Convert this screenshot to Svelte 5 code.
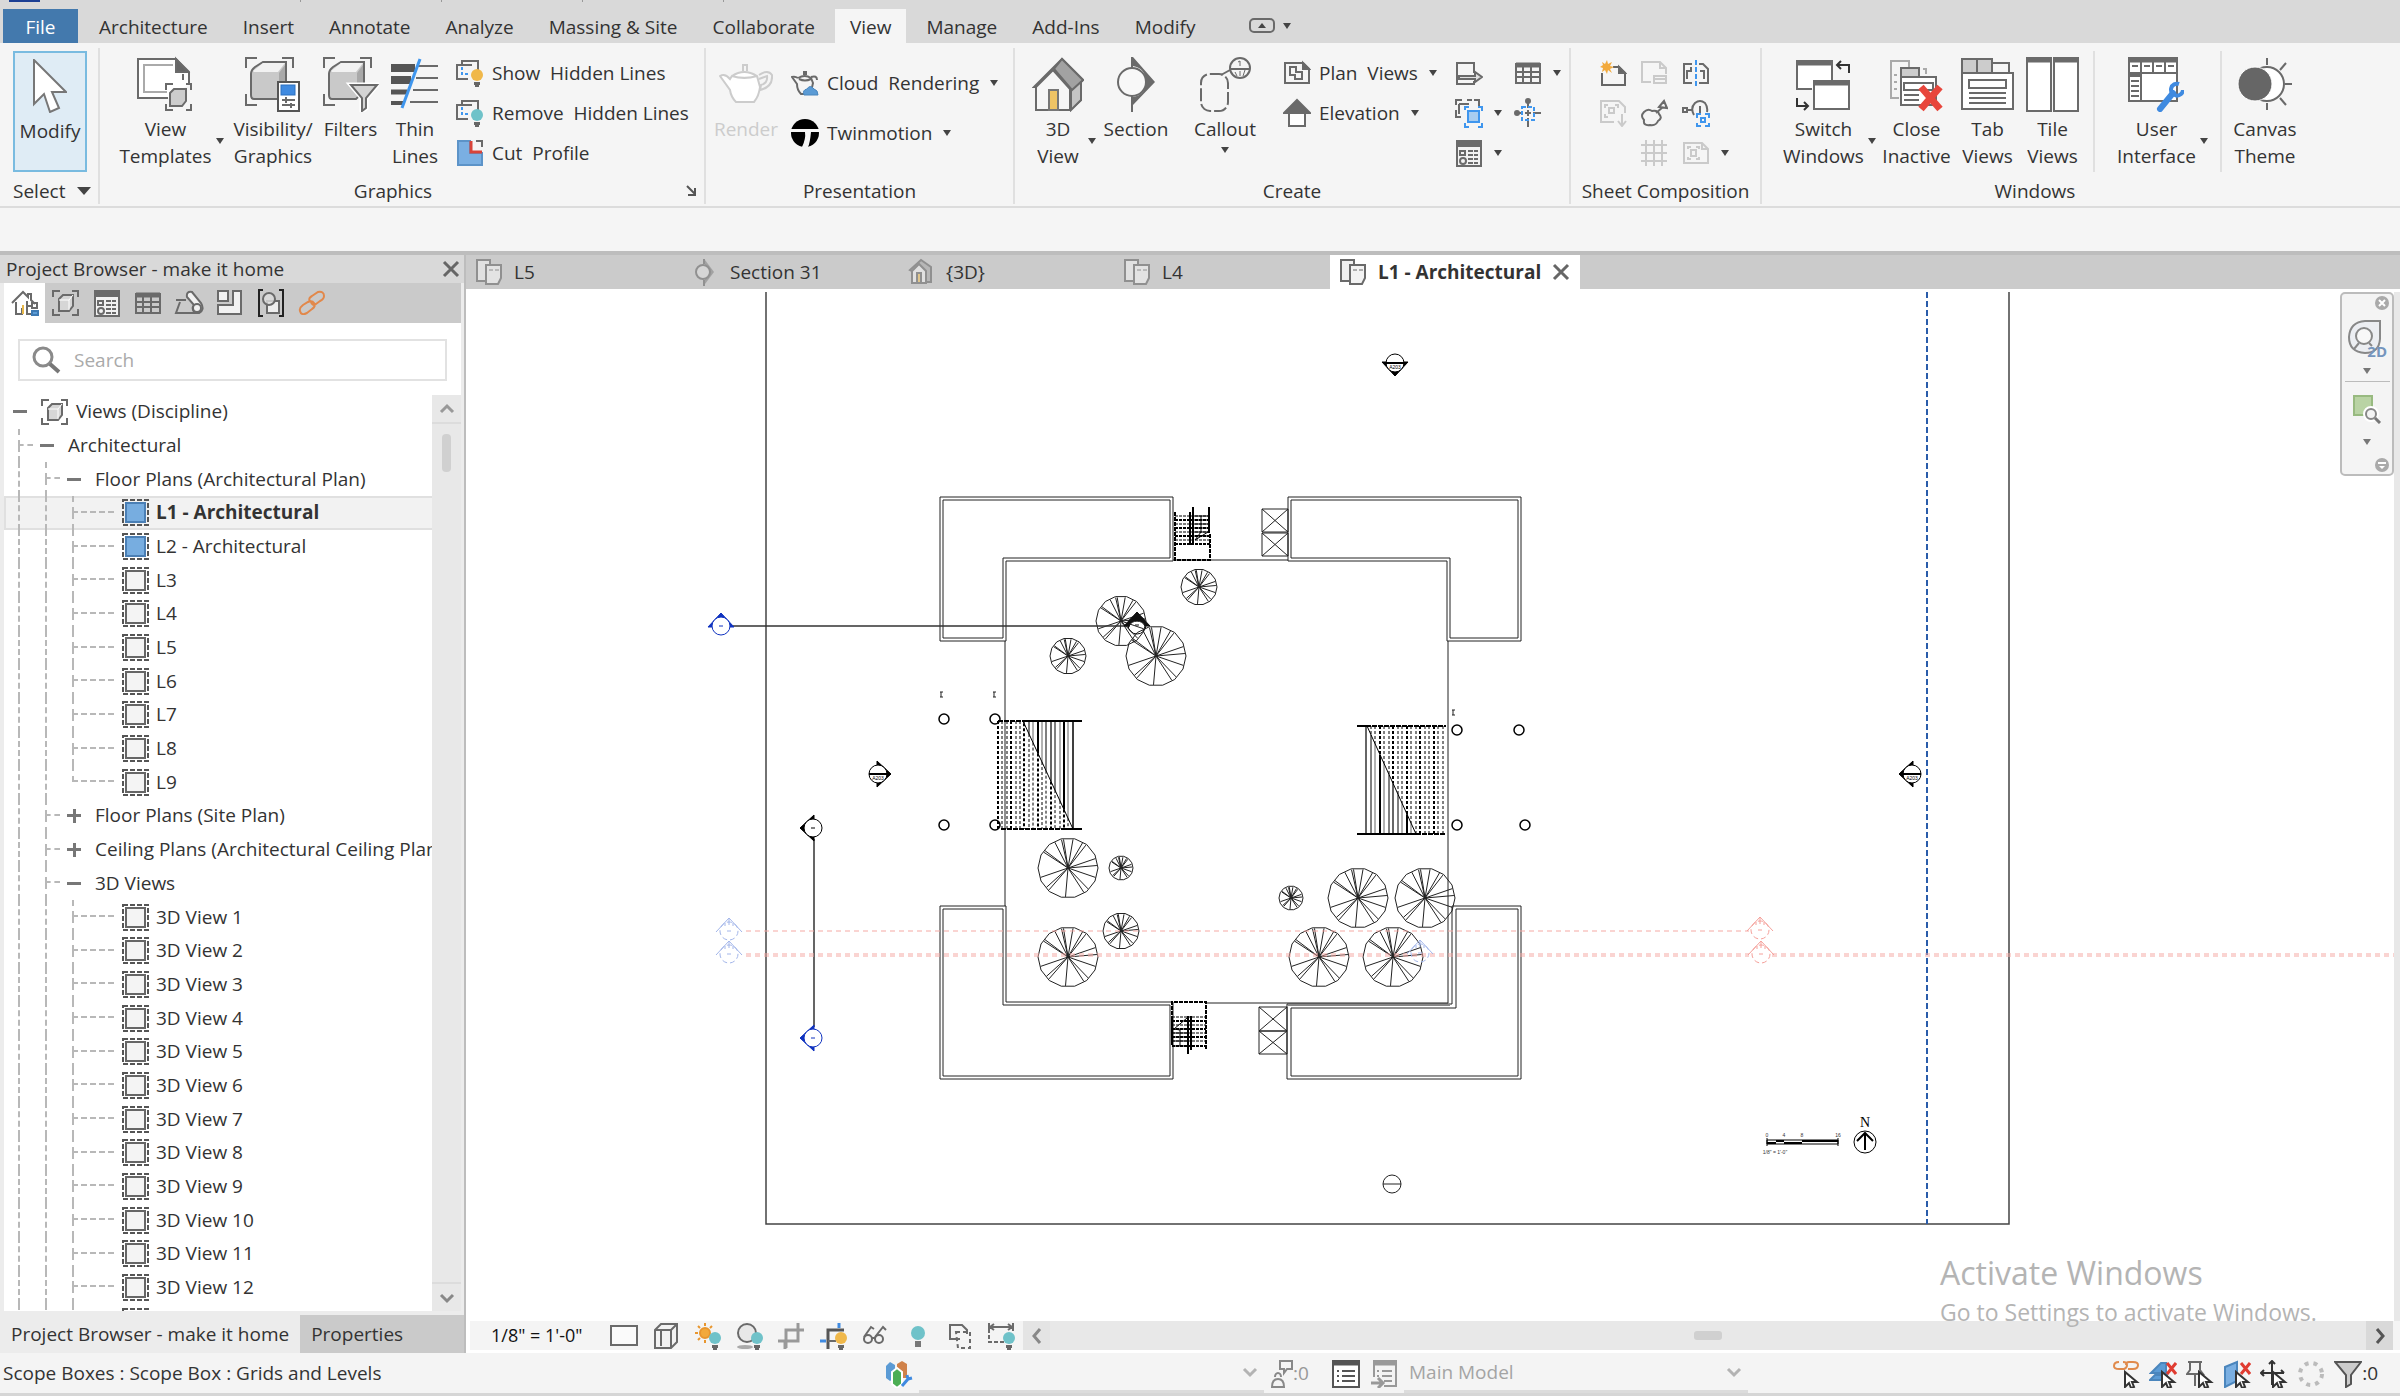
<script>
  // each icon: [width, height, svg markup]
  const cube = '<path d="M6 18q0-4 4-7l8-5h23v29l-8 8H9q-3 0-3-4z" fill="#c9c9c9"/><path d="M8 15l10-8h22l-7 9H9z" fill="#f2f2f2" stroke="none"/><path d="M34 17l6-8v25l-6 7z" fill="#a9a9a9" stroke="none"/>';
  const corners = '<path d="M1 12V2H12M37 2H48V12M1 38V49H12" stroke-width="2"/>';
  const bulb = (x, y, c) =>
    `<g stroke="none"><circle cx="${x}" cy="${y}" r="6" fill="${c}"/><rect x="${x - 3}" y="${y + 7}" width="6" height="3" fill="#666"/><rect x="${x - 2}" y="${y + 10}" width="4" height="2" fill="#666"/></g>`;
  const hidden = '<path d="M6 5V2H22V12M12 20H1V6H16" /><path d="M6 8V15H14" stroke="#3f96ee" stroke-dasharray="3 2"/>';
  const cursor = '<path d="M13 12V27L17 23 19 28 22 27 20 22H25Z" fill="#fff" stroke="#333" stroke-width="2"/>';
  const cross = '<path d="M18 3L27 14M27 3L18 14" stroke="#e03c31" stroke-width="3"/>';
  const smallBrackets = '<path d="M1 8V2H8M20 2H26V8M26 20V26H20M8 26H1V20"/>';
  const smallCube = '<path d="M7 10l4-4h10v11l-4 5H7z" fill="#d6d6d6"/><path d="M7 11h10l4-5M17 11v10" stroke="#fff" stroke-width="1"/>';
  const planIcon = '<path d="M11 23H2V2H15V6" fill="#f0f0f0"/><path d="M11 11V7H26V20L23 26H11Z" fill="#f3f3f3"/><path d="M14 12H25" stroke-dasharray="4 2" stroke-width="1"/>';

  const icons = {
    modify: [34, 54, '<path d="M1 1V45L11 35 17 53 26 49 19 33H33Z" fill="#fff" stroke="#777"/>'],
    templates: [56, 56, '<path d="M31 42H1V3H39L52 16V29" fill="#fff"/><path d="M39 3V16H51Z" fill="#666"/><path d="M30 36H7V9H36" stroke="#aaa"/><path d="M46 24V18"/><path d="M29 34V28H36M49 28H54V34M29 48V54H36M49 54H54V48"/><path d="M33 37l4-4h12v12l-4 5H33z" fill="#ccc"/>'],
    visibility: [56, 56, corners + cube + '<rect x="33" y="26" width="21" height="29" fill="#fff" stroke="#555"/><rect x="36" y="29" width="14" height="10" fill="#3f8ae0" stroke="#2c70c0" stroke-width="1"/><path d="M37 44H50M37 49H50M41 41V47M46 47V52"/>'],
    filters: [56, 56, corners + cube + '<path d="M28 29H54L43 42V52L39 55V42Z" fill="#d4d4d4" stroke="#fff" stroke-width="5"/><path d="M28 29H54L43 42V52L39 55V42Z" fill="#d4d4d4"/>'],
    thin: [50, 52, '<path d="M1 10H25M1 22H21" stroke="#555" stroke-width="8"/><path d="M1 34H17" stroke="#555" stroke-width="5"/><path d="M1 45H13" stroke="#555" stroke-width="4"/><path d="M28 8H48M26 20H48M23 32H48M20 44H48"/><path d="M30 1L12 50" stroke="#3f96ee" stroke-width="3"/>'],
    show: [28, 28, hidden + bulb(21, 16, '#f0b84a')],
    remove: [28, 28, hidden + bulb(21, 16, '#6fc2c9')],
    cut: [28, 28, '<path d="M2 2H14V14H26V26H2Z" fill="#7aafe2" stroke="#5c93c8"/><path d="M15 2V13H26" stroke="#d8443a" stroke-width="3"/><path d="M20 2H26V8"/>'],
    render: [54, 42, '<g stroke="#ccc"><path d="M13 13Q25 5 38 13L41 24Q40 33 35 39H17Q12 34 11 27L1 13Q6 10 11 16L13 13Q25 17 38 13" fill="#fff"/><path d="M40 12Q49 6 53 12Q54 24 41 27L42 22Q49 20 48 13L40 16"/><path d="M24 8V2H28V8"/></g>'],
    cloud: [28, 28, '<path d="M7 9Q14 5 20 9L22 14Q20 24 18 25H10Q6 21 6 15L1 8Q4 7 7 9M20 8Q26 6 26 11M13 6V3H15V6M8 10Q14 13 20 10" stroke-width="2"/><path d="M13 26q-2-5 3-6q3-5 7 0q4 1 4 6z" fill="#5b9bd5" stroke="#4b86bd" stroke-width="1"/>'],
    twin: [28, 28, '<g stroke="none"><circle cx="14" cy="14" r="14" fill="#000"/><path d="M0 10H28V13H20Q19 24 17 28L11 28Q15 20 14 13H0Z" fill="#f5f5f5"/></g>'],
    house: [52, 56, '<path d="M2 31L30 3L51 24L49 26V44L38 54H4V31Z" fill="#f4f4f4"/><path d="M39 31L49 24V44L39 54Z" fill="#c4c4c4"/><path d="M30 3L51 24L40 34L22 13Z" fill="#a2a2a2"/><path d="M4 31L21 14L38 33V54H4Z" fill="#f6f6f6"/><rect x="17" y="34" width="9" height="20" fill="#efc465" stroke="#777"/>'],
    section: [50, 56, '<path d="M22 1L44 26L22 49V41Q35 39 35 25Q34 12 22 10Z" fill="#6a6a6a" stroke="none"/><circle cx="21" cy="26" r="14" fill="#f8f8f8"/><path d="M21 1V12M21 40V56"/>'],
    callout: [56, 56, '<rect x="4" y="18" width="27" height="37" rx="9" stroke-dasharray="13 3"/><path d="M24 19L33 14"/><circle cx="43" cy="12" r="10"/><path d="M33 13H53"/><path d="M41 6L43 5V10M38 16L40 20M43 15V20M48 14L46 20" stroke-width="1"/>'],
    planview: [28, 28, '<path d="M2 4H20L26 10V24H2Z"/><path d="M20 4V10H26Z" fill="#6a6a6a"/><path d="M7 8H13V13H19V20H12V16H7Z"/>'],
    elev: [28, 30, '<path d="M6 15H22V28H6Z" fill="#fff"/><path d="M1 15L14 2L27 15Z" fill="#6a6a6a"/>'],
    drafting: [28, 28, '<path d="M19 14V4H2V25H19V22"/><path d="M4 17H20V13L27 18L20 23V20H4Z" fill="#e0e0e0"/>'],
    schedule: [28, 28, '<path d="M2 5H26V24H2Z"/><path d="M2 6H26" stroke-width="5"/><path d="M2 13H26M2 18H26M9 8V24M17 8V24"/>'],
    duplicate: [28, 30, '<path d="M1 7V2H7M12 2H17M1 12V19H6M4 6H14M4 6V16M19 2H24V8" /><path d="M10 12V9H14M23 9H27V13M27 25V29H23M14 29H10V25" stroke="#3f96ee"/><rect x="13" y="13" width="11" height="11" fill="#a8cdf0" stroke="#3f96ee"/>'],
    scope: [28, 30, '<path d="M14 1V10M14 20V29M1 15H9M19 15H27M14 12V18M11 15H17"/><circle cx="14" cy="3" r="2"/><circle cx="3" cy="15" r="2"/><rect x="8" y="9" width="12" height="13" stroke="#3f96ee" stroke-dasharray="4 2"/>'],
    legend: [28, 28, '<rect x="2" y="2" width="24" height="25" fill="#f2f2f2"/><path d="M2 5H26" stroke-width="6"/><rect x="5" y="12" width="5" height="4"/><circle cx="8" cy="22" r="3"/><path d="M13 12H23M13 16H23M13 20H23M13 24H23" stroke-dasharray="5 1"/>'],
    sheet: [28, 28, '<path d="M3 14V26H26V14L20 8H14" stroke="#666"/><path d="M20 8V14H26Z" fill="#666"/><path d="M8 1L9 5L13 3L11 7L15 8L11 10L13 14L9 11L8 15L6 11L3 13L4 9L1 8L4 6L3 3L6 5Z" fill="#f2a93b" stroke="none"/>'],
    titleblock: [28, 28, '<g stroke="#cacaca"><path d="M11 23H2V3H20L26 9V15"/><path d="M20 3V9H26M14 17H26V24H14ZM14 20H26"/></g>'],
    matchline: [28, 28, '<path d="M10 5H2V24H10M17 5H21L26 10V24H17M5 20V12H9V8M22 20V12H18"/><path d="M14 1V27" stroke="#3f96ee" stroke-width="2" stroke-dasharray="5 2"/>'],
    viewon: [28, 28, '<g stroke="#cacaca"><path d="M15 23H2V2H20L26 8V14"/><path d="M6 9V6H9M16 6H19V9M6 15V18H9M10 9H15V14H10ZM23 15V25M19 22L23 27L27 22"/></g>'],
    revision: [28, 28, '<path d="M4 13Q8 9 12 12Q18 11 19 15Q23 19 18 22Q16 27 10 26Q3 27 4 21Q0 17 4 13ZM16 14L23 8M19 8L24 2L27 9Z"/>'],
    guide: [28, 28, '<path d="M1 6H27M1 14H27M1 22H27M6 1V27M14 1V27M22 1V27" stroke="#cacaca"/>'],
    viewref: [28, 28, '<path d="M1 9H5V13H1ZM6 11H10M12 16Q8 9 13 4Q18 0 23 4Q26 8 25 13M18 7V14"/><path d="M15 19V15H19M23 15H27V19M27 24V27H23M19 27H15V24" stroke="#3f96ee"/><rect x="19" y="19" width="4" height="4" stroke="#3f96ee"/>'],
    viewports: [28, 28, '<g stroke="#cacaca"><path d="M2 4H20L26 10V24H2Z"/><path d="M20 4V10H26M6 10V8H9M14 8H17V10M6 18V20H9M14 20H17V18M9 11H14V17H9Z"/></g>'],
    switch: [56, 56, '<path d="M17 33H2V5H37V24" fill="#fff"/><path d="M2 7H37" stroke-width="5"/><rect x="19" y="25" width="35" height="28" fill="#fff"/><path d="M19 27H54" stroke-width="5"/><path d="M54 17V9H42M46 5L42 9L46 13M2 42V50H13M9 46L13 50L9 54" stroke="#333"/>'],
    closeinactive: [56, 56, '<path d="M10 42H2V5H20V11M5 19H8M5 26H8M5 33H8M34 13H37V18" stroke="#aaa"/><path d="M12 49V12H30V21H47V49Z" fill="#fff"/><path d="M12 12H30V21H12Z" fill="#ccc"/><path d="M15 27H44V34H15ZM15 39H30M15 44H30"/><path d="M32 31L51 53M51 31L32 53" stroke="#e8463c" stroke-width="7"/>'],
    tabviews: [56, 56, '<path d="M2 17V3H32V17M17 3V17" fill="#ccc"/><path d="M32 7H49V17"/><rect x="2" y="17" width="51" height="36" fill="#fff"/><path d="M9 24H46V32H9ZM9 37H46M9 42H46M9 47H46"/>'],
    tileviews: [55, 56, '<rect x="2" y="2" width="24" height="53" fill="#fff"/><rect x="29" y="2" width="24" height="53" fill="#fff"/><path d="M2 4H26M29 4H53" stroke-width="5"/>'],
    userif: [56, 56, '<rect x="1" y="2" width="48" height="43" fill="#fff"/><path d="M1 4H49" stroke-width="5"/><path d="M2 17H48M13 6V45M25 6V17M37 6V17M4 10H10M16 10H22M28 10H34M40 10H46M3 25H11M3 30H11M3 35H11M3 40H11" /><path d="M2 19H12" stroke-width="4"/><path d="M32 53L45 37" stroke="#3f8ae0" stroke-width="6" stroke-linecap="round"/><path d="M51 28A6 6 0 1 0 55 34" stroke="#3f8ae0" stroke-width="4"/>'],
    canvas: [56, 56, '<circle cx="30" cy="28" r="17" fill="#fff"/><path d="M30 2V9M30 47V54M43 14L49 7M43 42L49 49M48 28H55M42 10"/><circle cx="18" cy="28" r="17" fill="#666" stroke="#fff" stroke-width="1"/>'],
    browser: [28, 28, '<path d="M1 14L12 3L17 8V5H20V11L24 15M5 13V25H11V19" /><path d="M12 16V25" stroke="#e8b84a"/><path d="M16 12V25H21M16 17H21M21 14H26V19H21Z"/><rect x="21" y="22" width="6" height="4" fill="#5b9bd5" stroke="#3d79b3"/>'],
    views: [28, 28, smallBrackets + smallCube],
    sheets: [30, 28, '<path d="M6 13L2 24H22"/><path d="M2 11H12"/><path d="M13 8Q12 2 18 3L27 14Q31 21 25 24H21Q17 20 20 16Z" fill="#f2f2f2"/><circle cx="23" cy="19" r="4" fill="#f2f2f2"/>'],
    families: [28, 28, '<path d="M2 2H12V12H2ZM17 2H25V25H2V16H17Z" fill="#f2f2f2"/>'],
    groups: [28, 28, '<path d="M6 1H2V27H6M22 1H26V27H22" stroke="#222"/><path d="M10 12H22V24H10Z" fill="#eee"/><circle cx="12" cy="10" r="6" fill="#ddd" fill-opacity=".8"/>'],
    links: [28, 28, '<path d="M12 13Q10 9 14 7L20 3Q26 2 26 7Q26 10 22 12L18 15Q14 17 13 13M16 14Q18 18 14 20L9 24Q3 27 2 22Q1 19 5 16L10 13Q14 11 16 14" stroke="#e2884a"/>'],
    search: [30, 30, '<circle cx="12" cy="12" r="9" stroke="#8a8a8a" stroke-width="3"/><path d="M19 19L28 27" stroke="#777" stroke-width="4"/>'],
    sheetOn: [27, 27, '<rect x="1" y="1" width="25" height="25" stroke="#555" stroke-dasharray="5 2"/><rect x="4" y="4" width="19" height="19" fill="#77ade0" stroke="#4a7fb5"/>'],
    sheetOff: [27, 27, '<rect x="1" y="1" width="25" height="25" stroke="#555" stroke-dasharray="5 2"/><rect x="4" y="4" width="19" height="19" fill="#f4f4f4" stroke="#666"/>'],
    plan: [28, 28, planIcon],
    sectionTab: [28, 28, '<path d="M14 2L23 14L14 26Z" fill="#888" stroke="none"/><circle cx="12" cy="14" r="7" fill="#ddd"/><path d="M13 1V6M13 22V28"/>'],
    houseTab: [28, 28, '<path d="M3 12L14 2L24 9V24H5V13Z" fill="#aaa"/><path d="M5 13L12 6L19 13V25H5Z" fill="#f0f0f0"/><rect x="10" y="15" width="4" height="10" fill="#efc465"/>'],
    detail: [28, 28, '<rect x="1" y="4" width="26" height="19" fill="#fafafa"/>'],
    style: [28, 28, '<path d="M3 8L9 2H25V20L19 26H3ZM3 8H19V26M19 8L25 2M9 8V24" fill="#f2f2f2"/>'],
    sun: [28, 28, '<g stroke="#e8962e"><circle cx="11" cy="11" r="5" fill="#f2a93b"/><path d="M11 1V4M11 18V21M1 11H4M4 4L6 6M18 4L16 6M4 18L6 16"/></g>' + bulb(21, 16, '#6fc2c9')],
    shadow: [28, 28, '<ellipse cx="9" cy="25" rx="8" ry="2" fill="#aaa" stroke="none"/><circle cx="11" cy="11" r="9" fill="#e8e8e8"/>' + bulb(21, 16, '#6fc2c9')],
    crop: [28, 28, '<path d="M0 19H7M8 26V8H26M20 1V19H8M7 20V27" stroke="#999" stroke-width="3"/>'],
    cropOn: [28, 28, '<path d="M8 27V8H24" stroke="#555" stroke-width="3"/><path d="M0 19H6M19 1V6" stroke="#3f8ae0" stroke-width="3"/><path d="M8 19H16"/>' + bulb(21, 16, '#f0b84a')],
    glasses: [28, 28, '<circle cx="6" cy="17" r="4"/><circle cx="17" cy="17" r="4"/><path d="M10 16H13M2 15L9 5L12 7M13 15L21 5L24 8"/>'],
    reveal: [28, 28, '<g stroke="none"><circle cx="14" cy="11" r="7" fill="#6fc2c9"/><rect x="11" y="19" width="6" height="6" fill="#777"/></g>'],
    worksharing: [28, 28, '<path d="M14 17H4V3H16L21 8V12"/><path d="M10 10H24V26H12Z" stroke-dasharray="4 3"/>'],
    constraints: [28, 28, '<path d="M1 1V11M25 1V9M2 5H24M6 2L2 5L6 8M20 2L24 5L20 8"/><path d="M1 13V20H16" stroke-dasharray="4 2"/>' + bulb(21, 16, '#6fc2c9')],
    worksets: [28, 28, '<g stroke="none"><path d="M1 6L5 2L10 5V18L5 21L1 18Z" fill="#5b9bd5"/><path d="M12 4L17 1L22 4V18H12Z" fill="#d0824a"/><path d="M7 12L12 8L17 12V24L12 28L7 24Z" fill="#4cae54" stroke="#fff"/></g><path d="M17 26L23 19L22 15M23 19L27 18" stroke="#3f8ae0" stroke-width="3"/>'],
    person: [22, 28, '<path d="M9 1H21V9H16L13 13V9H9ZM4 17a3 4 0 1 1 6 0M1 27Q1 19 7 19Q13 19 13 27Z" stroke="#888"/>'],
    list: [28, 28, '<rect x="1" y="1" width="26" height="26" fill="#fff" stroke="#555"/><path d="M1 3H27" stroke-width="5" stroke="#555"/><path d="M5 11H7M5 16H7M5 21H7M10 11H23M10 16H23M10 21H23" stroke="#555"/>'],
    listArrow: [28, 28, '<g stroke="#999"><path d="M4 17V1H26V26H14"/><path d="M4 3H26" stroke-width="5"/><path d="M7 11H9M7 16H9M12 11H22M12 16H22M14 21H22"/><path d="M1 23H13M8 18L13 23L8 28" stroke-width="3"/></g>'],
    selLinks: [28, 28, '<path d="M7 2Q2 2 2 6Q2 9 7 9H12Q15 8 15 5Q15 2 11 2M16 9H21Q26 9 26 5Q26 2 21 2H17Q14 2 14 5" stroke="#e08a4c"/>' + cursor],
    selUnder: [28, 28, '<path d="M1 20L6 15H18V20ZM2 13L12 3H17V13Z" fill="#5b9bd5" stroke="#4b86bd"/>' + cross + cursor],
    selPinned: [28, 28, '<path d="M2 2H16M4 2V10L1 14H17L14 10V2M9 14V26"/>' + cursor],
    selFace: [28, 28, '<path d="M2 7L14 2V21L2 27Z" fill="#7aafe2" stroke="#4b86bd"/>' + cross + cursor],
    drag: [28, 28, '<path d="M12 1V25M1 13H24M9 4L12 1L15 4M4 10L1 13L4 16M21 10L24 13" stroke="#333"/>' + cursor],
    busy: [28, 28, '<circle cx="14" cy="14" r="11" stroke="#bbb" stroke-width="4" stroke-dasharray="4 5"/>'],
    funnel: [28, 28, '<path d="M1 2H27L17 15V24L12 27V15Z" fill="#ccc" stroke="#555"/>'],
    pill: [26, 18, '<rect x="1" y="2" width="24" height="13" rx="4"/><path d="M9 11H17L13 6Z" fill="#444" stroke="none"/>'],
    launcher: [12, 12, '<path d="M1 1L9 9M9 3V10H2" stroke="#555"/>'],
    cross: [18, 18, '<path d="M2 2L16 16M16 2L2 16" stroke="#666" stroke-width="3"/>'],
    up: [16, 16, '<path d="M2 11L8 5L14 11" stroke="#999" stroke-width="3"/>'],
    down: [16, 16, '<path d="M2 5L8 11L14 5" stroke="#888" stroke-width="3"/>'],
    left: [16, 20, '<path d="M11 3L5 10L11 17" stroke="#888" stroke-width="3"/>'],
    right: [16, 20, '<path d="M5 3L11 10L5 17" stroke="#555" stroke-width="3"/>'],
    wheel: [40, 40, '<path d="M2 18Q3 3 18 2H33V20Q32 34 18 34Q2 33 2 18Z" fill="#eceef2" stroke="#888"/><circle cx="17" cy="17" r="8" fill="#f8f8f8" stroke="#888"/><path d="M12 24L7 30M22 24L25 27" stroke="#888"/>'],
    zoomRegion: [30, 30, '<rect x="2" y="2" width="18" height="19" fill="#b9d3a4" stroke="#98ba80"/><circle cx="19" cy="20" r="7" fill="#fff" stroke="#fff"/><circle cx="19" cy="20" r="5" fill="#f4f4f4" stroke="#888"/><path d="M23 24L28 29" stroke="#777" stroke-width="3"/>'],
    navClose: [14, 14, '<circle cx="7" cy="7" r="7" fill="#aaa" stroke="none"/><path d="M4 4L10 10M10 4L4 10" stroke="#fff"/>'],
    navMore: [14, 14, '<circle cx="7" cy="7" r="7" fill="#aaa" stroke="none"/><path d="M3 5H11" stroke="#fff"/><path d="M4 8H10L7 11Z" fill="#fff" stroke="none"/>']
  };

  const ribbonTabs = ["Architecture", "Insert", "Annotate", "Analyze", "Massing & Site", "Collaborate", "View", "Manage", "Add-Ins", "Modify"];

  const views = (names, icon) => names.map((name, i) => ({ name, depth: 3, icon: icon(i), last: false }));
  const floors = views(["L1 - Architectural", "L2 - Architectural", "L3", "L4", "L5", "L6", "L7", "L8", "L9"], (i) => (i < 2 ? "sheetOn" : "sheetOff"));
  floors[floors.length - 1].last = true;
  let selected = "L1 - Architectural";

  const tree = [
    { name: "Views (Discipline)", depth: 0, open: true, icon: "views" },
    { name: "Architectural", depth: 1, open: true },
    { name: "Floor Plans (Architectural Plan)", depth: 2, open: true },
    ...floors,
    { name: "Floor Plans (Site Plan)", depth: 2, open: false },
    { name: "Ceiling Plans (Architectural Ceiling Plan)", depth: 2, open: false },
    { name: "3D Views", depth: 2, open: true },
    ...views(Array.from({ length: 12 }, (_, i) => "3D View " + (i + 1)), () => "sheetOff"),
    { name: "", depth: 3, icon: "sheetOff" }
  ];

  const docTabs = [
    { name: "L5", icon: "plan" },
    { name: "Section 31", icon: "sectionTab" },
    { name: "{3D}", icon: "houseTab" },
    { name: "L4", icon: "plan" },
    { name: "L1 - Architectural", icon: "plan", active: true }
  ];

  const viewTools = ["detail", "style", "sun", "shadow", "crop", "cropOn", "glasses", "reveal", "worksharing", "constraints"];
  const browserTabs = ["browser", "views", "legend", "schedule", "sheets", "families", "groups", "links"];
  const selectTools = ["selLinks", "selUnder", "selPinned", "selFace", "drag", "busy"];

  // drawing data
  const spokes = [-19, -5, 19, 46, 57, 95, 131, 138, 161, 213, 217, 243, 257, 261, 280, 300, 308];
  const trees = [
    [1199, 587, 18], [1121, 621, 25], [1068, 656, 18], [1156, 656, 30],
    [1068, 868, 30], [1121, 868, 12], [1121, 931, 18], [1068, 957, 30],
    [1291, 898, 12], [1358, 898, 30], [1425, 898, 30], [1319, 957, 30], [1393, 957, 30]
  ];
  const columns = [[944, 719], [995, 719], [944, 825], [995, 825], [1457, 730], [1519, 730], [1457, 825], [1525, 825]];
  const polar = (r, deg) => [Math.round(r * Math.cos((deg * Math.PI) / 180) * 10) / 10, Math.round(r * Math.sin((deg * Math.PI) / 180) * 10) / 10];
  const treePath = (r) => {
    const ring = Array.from({ length: 14 }, (_, i) => polar(r, i * (360 / 14)).join(" "));
    return "M" + ring.join("L") + "Z" + spokes.map((a) => "M0 0L" + polar(r - 1, a).join(" ")).join("");
  };
  const leftTreads = Array.from({ length: 18 }, (_, i) => 998 + Math.round(i * 4.4));
  const rightTreads = Array.from({ length: 18 }, (_, i) => 1366 + Math.round(i * 4.5));
  const diag = (x, x0, x1, y0, y1) => Math.max(y0, Math.min(y1, y0 + ((x - x0) / (x1 - x0)) * (y1 - y0)));
  const risers = [516, 520, 524, 528, 532, 536, 540, 544];
  const lowRisers = [1017, 1021, 1025, 1029, 1033, 1037, 1041, 1046];
</script>

{#snippet icon(name)}
  <svg class="icon" width={icons[name][0]} height={icons[name][1]} viewBox="0 0 {icons[name][0]} {icons[name][1]}" aria-hidden="true">
    {@html icons[name][2]}
  </svg>
{/snippet}

{#snippet big(name, lines, caret, extra)}
  <button class="big {extra || ''}">
    <span class="stack">
      <span class="pic">{@render icon(name)}</span>
      {#each lines as line}<span class="line">{line}</span>{/each}
      {#if caret === "below"}<i class="caret below"></i>{/if}
    </span>
    {#if caret === "side"}<i class="caret side"></i>{/if}
  </button>
{/snippet}

{#snippet small(name, text, caret)}
  <button class="small" aria-label={text || name}>
    {@render icon(name)}
    {#if text}<span>{text}</span>{/if}
    {#if caret}<i class="caret"></i>{/if}
  </button>
{/snippet}

{#snippet marker(x, y, angle, color, kind)}
  <g transform="translate({x} {y})" stroke={color} fill="none">
    {#if kind === "faint"}
      <path d="M-13 1L0 -13L13 1M-4 -8V-5M0 -12V-6M4 -8V-5" />
      <circle r="9" stroke-dasharray="5 3" />
    {:else}
      <path transform="rotate({angle})" d="M-13 1L0 -13L13 1H8A9 9 0 0 0 -8 1Z" fill={color} />
      <circle r="9" fill={kind === "hollow" ? "none" : "#fff"} />
    {/if}
    {#if kind === "elev"}
      <path d="M-9 0H9" stroke-width="2" />
      <text y="6" class="tiny" fill={color}>A203</text>
    {:else}
      <path d="M-2 0H2" />
    {/if}
  </g>
{/snippet}

<div class="app">
  <div class="titlecut"><b></b><i></i><i></i><i></i><i></i></div>
  <nav class="tabs">
    <button class="file">File</button>
    {#each ribbonTabs as tab}
      <button class="tab" class:current={tab === "View"}>{tab}</button>
    {/each}
    <button class="pill" aria-label="Minimize ribbon">{@render icon("pill")}<i class="caret"></i></button>
  </nav>

  <div class="ribbon">
    <section class="panel select">
      <div class="body">{@render big("modify", ["Modify"], "", "pressed")}</div>
      <button class="title">Select <i class="caret wide"></i></button>
    </section>
    <section class="panel graphics">
      <div class="body">
        {@render big("templates", ["View", "Templates"], "side")}
        {@render big("visibility", ["Visibility/", "Graphics"])}
        {@render big("filters", ["Filters"])}
        {@render big("thin", ["Thin", "Lines"])}
        <div class="list">
          {@render small("show", "Show  Hidden Lines")}
          {@render small("remove", "Remove  Hidden Lines")}
          {@render small("cut", "Cut  Profile")}
        </div>
      </div>
      <div class="title"><span>Graphics</span>{@render icon("launcher")}</div>
    </section>
    <section class="panel presentation">
      <div class="body">
        {@render big("render", ["Render"], "", "off")}
        <div class="list loose">
          {@render small("cloud", "Cloud  Rendering", true)}
          {@render small("twin", "Twinmotion", true)}
        </div>
      </div>
      <div class="title">Presentation</div>
    </section>
    <section class="panel create">
      <div class="body">
        {@render big("house", ["3D", "View"], "side")}
        {@render big("section", ["Section"])}
        {@render big("callout", ["Callout"], "below")}
        <div class="list">
          {@render small("planview", "Plan  Views", true)}
          {@render small("elev", "Elevation", true)}
        </div>
        <div class="list">
          {@render small("drafting")}
          {@render small("duplicate", "", true)}
          {@render small("legend", "", true)}
        </div>
        <div class="list">
          {@render small("schedule", "", true)}
          {@render small("scope")}
        </div>
      </div>
      <div class="title">Create</div>
    </section>
    <section class="panel sheets">
      <div class="body">
        <div class="icongrid">
          {@render small("sheet")}{@render small("titleblock")}{@render small("matchline")}
          {@render small("viewon")}{@render small("revision")}{@render small("viewref")}
          <span></span>{@render small("guide")}{@render small("viewports", "", true)}
        </div>
      </div>
      <div class="title">Sheet Composition</div>
    </section>
    <section class="panel windows">
      <div class="body">
        {@render big("switch", ["Switch", "Windows"], "side")}
        {@render big("closeinactive", ["Close", "Inactive"])}
        {@render big("tabviews", ["Tab", "Views"])}
        {@render big("tileviews", ["Tile", "Views"])}
        {@render big("userif", ["User", "Interface"], "side", "ruled spaced")}
        {@render big("canvas", ["Canvas", "Theme"], "", "ruled")}
      </div>
      <div class="title">Windows</div>
    </section>
  </div>
  <div class="options"></div>

  <div class="work">
    <aside class="dock">
      <header><span>Project Browser - make it home</span><button aria-label="Close">{@render icon("cross")}</button></header>
      <div class="inner">
        <div class="docktools">
          {#each browserTabs as name, i}
            <button class:current={i === 0} aria-label={name}>{@render icon(name)}</button>
          {/each}
        </div>
        <label class="search">
          {@render icon("search")}
          <input type="text" placeholder="Search" aria-label="Search" />
        </label>
        <div class="treewrap">
          <div class="treeview">
            <ul>
              {#each tree as node}
                <li class="d{node.depth}" class:selected={node.name === selected}>
                  {#each Array(Math.max(0, node.depth - 1)) as _}<span class="guide"></span>{/each}
                  {#if node.depth > 0}<span class="stub" class:last={node.last}></span>{/if}
                  {#if node.depth < 3}<button class="toggle" class:open={node.open} aria-label="Toggle {node.name}"></button>{/if}
                  {#if node.icon}{@render icon(node.icon)}{/if}
                  <span class="name">{node.name}</span>
                </li>
              {/each}
            </ul>
          </div>
          <div class="vscroll">
            <button aria-label="Scroll up">{@render icon("up")}</button>
            <div class="vtrack"><i></i></div>
            <button aria-label="Scroll down">{@render icon("down")}</button>
          </div>
        </div>
      </div>
      <footer>
        <button class="current">Project Browser - make it home</button>
        <button>Properties</button>
      </footer>
    </aside>

    <main>
      <div class="doctabs">
        {#each docTabs as doc}
          <button class:current={doc.active}>
            {@render icon(doc.icon)}
            <span>{doc.name}</span>
            {#if doc.active}{@render icon("cross")}{/if}
          </button>
        {/each}
      </div>
      <div class="canvas">
        <svg class="plan" viewBox="466 289 1928 1032" preserveAspectRatio="xMinYMin slice" fill="none" stroke="#222" stroke-width="1">
          <path d="M766 292V1224H2009V292" stroke="#444" stroke-width="1.5" />
          <path d="M1927 292V1224" stroke="#2a5caa" stroke-width="2" stroke-dasharray="6 3" />

          <!-- building wings, outer and inner wall faces -->
          <path d="M940 497H1173V561H1006V641H940ZM943 500H1170V558H1003V638H943Z" />
          <path d="M1288 497H1521V641H1447V561H1288ZM1291 500H1518V638H1450V558H1291Z" />
          <path d="M940 906H1006V1002H1173V1079H940ZM943 909H1003V1005H1170V1076H943Z" />
          <path d="M1521 906H1452V1004H1287V1079H1521ZM1518 909H1456V1008H1291V1076H1518Z" />
          <path d="M1173 560H1288M1005 641V906M1448 641V1003H1207" />
          <path d="M1288 1005H1450" stroke="#888" stroke-width="2" />

          <!-- lifts -->
          <path d="M1262 509H1288V532H1262ZL1288 532M1288 509L1262 532M1262 533H1288V556H1262ZL1288 556M1288 533L1262 556" />
          <path d="M1259 1007H1287V1031H1259ZL1287 1031M1287 1007L1259 1031M1259 1031H1287V1054H1259ZL1287 1054M1287 1031L1259 1054" />

          <!-- service stairs -->
          <g stroke="#000">
            {#each risers as y, i}
              <path d="M1175 {y}H1210" stroke-dasharray="3 1" stroke-width={i % 2 ? 2 : 1} />
              {#if i < 6}<path d="M1194 {y}H1210" />{/if}
            {/each}
            <path d="M1193 507V545M1190 512V545M1209 507V533" stroke-width="2" />
            <path d="M1175 512V560H1210V533" stroke-width="2" stroke-dasharray="4 1" />
            <path d="M1201 516V532L1195 540L1208 532" />
            {#each lowRisers as y, i}
              <path d="M1172 {y}H1206" stroke-dasharray="3 1" stroke-width={i % 2 ? 2 : 1} />
              {#if i > 2}<path d="M1172 {y}H1188" />{/if}
            {/each}
            <path d="M1188 1016V1054M1191 1016V1050M1172 1020V1045" stroke-width="2" />
            <path d="M1172 1045V1002H1206V1050" stroke-width="2" stroke-dasharray="4 1" />
            <path d="M1180 1046V1030L1174 1029L1187 1018" />
          </g>

          <!-- main stairs -->
          <g stroke="#000">
            {#each leftTreads as x, i}
              <path d="M{x} {diag(x, 1023, 1073, 721, 829)}V829" stroke-dasharray="3 2" stroke-width={i % 3 ? 1 : 2} />
              {#if x > 1023}<path d="M{x} 721V{diag(x, 1023, 1073, 721, 829)}" stroke={i % 2 ? "#000" : "#666"} stroke-width={i % 3 ? 1 : 2} />{/if}
            {/each}
            <path d="M1023 721L1073 829M1073 721V829" />
            <path d="M998 721H1023M1001 829H1062" stroke-width="2" stroke-dasharray="5 1" />
            <path d="M1023 721H1082M1062 829H1082" stroke-width="2" />
            {#each rightTreads as x, i}
              <path d="M{x} 726V{diag(x, 1367, 1416, 726, 834)}" stroke-dasharray="3 2" stroke-width={i % 3 ? 1 : 2} />
              {#if x < 1416}<path d="M{x} {diag(x, 1367, 1416, 726, 834)}V834" stroke={i % 2 ? "#000" : "#666"} stroke-width={i % 3 ? 1 : 2} />{/if}
            {/each}
            <path d="M1367 726L1416 834" />
            <path d="M1366 726H1446M1416 834H1446" stroke-width="2" stroke-dasharray="5 1" />
            <path d="M1357 726H1366M1357 834H1416" stroke-width="2" />
          </g>

          {#each columns as [x, y]}
            <circle cx={x} cy={y} r="5" stroke="#000" stroke-width="1.5" />
          {/each}
          <path d="M940 692H943M941 692V697M940 697H943M993 692H996M994 692V697M993 697H996M1452 710H1455M1453 710V715M1452 715H1455" />

          <!-- planting -->
          {#each trees as [x, y, r]}
            <path transform="translate({x} {y})" d={treePath(r)} />
          {/each}

          <!-- section lines and heads -->
          <path d="M733 626H1130M814 839V1027" stroke="#333" stroke-width="1.5" />
          <path d="M746 931H1749M746 954H1749M746 956H1749M1772 954H2394M1772 956H2394" stroke="#f5a9a4" stroke-dasharray="5 4" />
          {@render marker(721, 626, 0, "#1033c0", "view")}
          {@render marker(1137, 625, 0, "#111", "hollow")}
          {@render marker(813, 828, -90, "#000", "view")}
          {@render marker(813, 1038, -90, "#1033c0", "view")}
          {@render marker(729, 931, 0, "#a3b6ea", "faint")}
          {@render marker(729, 954, 0, "#a3b6ea", "faint")}
          {@render marker(1420, 953, 0, "#a3b6ea", "faint")}
          {@render marker(1760, 930, 0, "#f5a09a", "faint")}
          {@render marker(1761, 954, 0, "#f5a09a", "faint")}
          {@render marker(878, 774, 90, "#000", "elev")}
          {@render marker(1912, 774, -90, "#000", "elev")}
          {@render marker(1395, 363, 180, "#000", "elev")}
          <circle cx="1392" cy="1184" r="9" />
          <path d="M1383 1184H1401" />

          <!-- scale bar and north arrow -->
          <path d="M1767 1140H1838V1144H1767ZM1767 1138V1146M1838 1138V1146" stroke="#000" />
          <path d="M1767 1143H1776M1776 1141H1784M1784 1143H1802M1802 1141H1838" stroke="#000" stroke-width="2" />
          <g class="tiny" fill="#333" stroke="none">
            <text x="1767" y="1137">0</text><text x="1784" y="1137">4</text><text x="1802" y="1137">8</text><text x="1838" y="1137">16</text>
            <text x="1775" y="1154">1/8" = 1'-0"</text>
          </g>
          <circle cx="1865" cy="1142" r="11" stroke="#000" />
          <path d="M1865 1150V1134M1857 1141L1865 1133L1873 1141" stroke="#000" stroke-width="2" />
          <text class="north" x="1865" y="1127" fill="#000" stroke="none">N</text>
        </svg>
        <div class="edge"></div>
        <div class="navbar">
          <button class="corner" aria-label="Close">{@render icon("navClose")}</button>
          <button class="wheel" aria-label="Steering wheel">{@render icon("wheel")}<b>2D</b></button>
          <i class="caret"></i>
          <hr />
          <button class="region" aria-label="Zoom in region">{@render icon("zoomRegion")}</button>
          <i class="caret"></i>
          <button class="corner end" aria-label="Options">{@render icon("navMore")}</button>
        </div>
      </div>
      <div class="viewbar">
        <button class="scale">1/8" = 1'-0"</button>
        {#each viewTools as name}
          <button class="tool" aria-label={name}>{@render icon(name)}</button>
        {/each}
        <button class="arrow" aria-label="Scroll left">{@render icon("left")}</button>
        <div class="htrack"><i></i></div>
        <button class="arrow dark" aria-label="Scroll right">{@render icon("right")}</button>
      </div>
      <div class="activate">
        <p>Activate Windows</p>
        <span>Go to Settings to activate Windows.</span>
      </div>
    </main>
  </div>

  <div class="status">
    <span class="msg">Scope Boxes : Scope Box : Grids and Levels</span>
    {@render icon("worksets")}
    <span class="drop"><select class="workset" aria-label="Active workset"><option></option></select>{@render icon("down")}</span>
    <span class="requests">{@render icon("person")}:0</span>
    {@render icon("list")}
    {@render icon("listArrow")}
    <span class="drop"><select class="model" aria-label="Design option"><option>Main Model</option></select>{@render icon("down")}</span>
    <div class="filters">
      {#each selectTools as name}
        <button aria-label={name}>{@render icon(name)}</button>
      {/each}
      <button class="count">{@render icon("funnel")}:0</button>
    </div>
  </div>
</div>

<style>
  :global(body) {
    margin: 0;
    overflow: hidden;
  }

  .app {
    display: flex;
    flex-direction: column;
    height: 100vh;
    font-family: "Open Sans", "Noto Sans", sans-serif;
    font-size: 19px;
    line-height: 27px;
    color: #333;
    background: #f5f5f5;
  }

  button {
    font: inherit;
    color: inherit;
    border: 0;
    padding: 0;
    background: none;
    white-space: pre;
    display: flex;
    align-items: center;
  }

  .icon {
    display: block;
    flex: none;
    fill: none;
    stroke: #6a6a6a;
    stroke-width: 2;
  }

  .caret {
    flex: none;
    width: 0;
    height: 0;
    border: 4px solid transparent;
    border-top: 6px solid #444;
    border-bottom: 0;
  }

  .caret.wide {
    border-width: 7px;
    border-top-width: 8px;
    border-bottom: 0;
    margin-left: 7px;
  }

  /* ribbon tabs */
  .titlecut {
    display: flex;
    gap: 140px;
    height: 2px;
    padding-left: 9px;
    background: #d9d9d9;
  }

  .titlecut b {
    width: 31px;
    margin-right: 120px;
    background: #1c3f94;
  }

  .titlecut i {
    width: 1px;
    background: #999;
  }

  .tabs {
    display: flex;
    height: 34px;
    padding: 7px 0 0 3px;
    background: #d9d9d9;
  }

  .file {
    width: 75px;
    justify-content: center;
    padding-top: 2px;
    margin-right: 4px;
    color: #fff;
    background: #4379ad;
  }

  .tab {
    padding: 2px 15px 0;
    margin-left: 2px;
    margin-right: 3px;
  }

  .tab.current {
    background: #f5f5f5;
  }

  .pill {
    gap: 8px;
    margin-left: 35px;
  }

  /* ribbon panels */
  .ribbon {
    display: flex;
    height: 158px;
    padding-top: 5px;
    border-bottom: 2px solid #dcdcdc;
  }

  .panel {
    display: flex;
    flex-direction: column;
    box-sizing: border-box;
    height: 156px;
    border-right: 2px solid #e0e0e0;
  }

  .body {
    display: flex;
    padding-top: 3px;
    height: 127px;
  }

  .title {
    display: flex;
    align-items: center;
    justify-content: center;
    height: 26px;
  }

  .big {
    height: 121px;
    align-items: flex-start;
    justify-content: center;
  }

  .stack {
    display: flex;
    flex-direction: column;
    align-items: center;
  }

  .pic {
    display: flex;
    align-items: center;
    justify-content: center;
    height: 65px;
  }

  .line {
    display: block;
  }

  .caret.side {
    margin: 87px 0 0 4px;
  }

  .caret.below {
    margin-top: 4px;
  }

  .pressed {
    box-sizing: border-box;
    width: 74px;
    border: 2px solid #79bbe0;
    background: #dfecf5;
  }

  .off {
    color: #ccc;
  }

  .list {
    display: flex;
    flex-direction: column;
    padding-top: 2px;
  }

  .small {
    height: 40px;
    gap: 8px;
  }

  .loose {
    padding-top: 7px;
  }

  .loose .small {
    height: 50px;
  }

  .small .caret {
    margin-left: 3px;
  }

  .select {
    width: 100px;
  }

  .select .body {
    padding-left: 13px;
  }

  .select .title {
    justify-content: flex-start;
    padding-left: 13px;
  }

  .graphics {
    width: 606px;
  }

  .graphics .body {
    display: grid;
    grid-template-columns: 113px 90px 65px 64px auto;
    justify-content: start;
    padding-left: 15px;
  }

  .graphics .list {
    margin-left: 9px;
  }

  .graphics .title span {
    flex: 1;
    text-align: center;
  }

  .graphics .title .icon,
  .graphics .title :global(svg) {
    margin-right: 6px;
  }

  .presentation {
    width: 309px;
  }

  .presentation .body {
    display: grid;
    grid-template-columns: 70px auto;
    column-gap: 10px;
    justify-content: start;
    padding-left: 5px;
  }

  .create {
    width: 556px;
  }

  .create .body {
    display: grid;
    grid-template-columns: 82px 62px 116px 172px 59px auto;
    justify-content: start;
    padding-left: 8px;
  }

  .sheets {
    width: 191px;
  }

  .icongrid {
    display: grid;
    grid-template-columns: 41px 42px auto;
    grid-auto-rows: 40px;
    padding: 2px 0 0 28px;
  }

  .windows {
    width: 546px;
    border-right: 0;
  }

  .windows .body {
    display: grid;
    grid-template-columns: 107px 67px 75px 55px 140px 88px;
    padding-left: 14px;
  }

  .ruled {
    border-left: 2px solid #e0e0e0;
  }

  .spaced {
    margin-left: 13px;
    padding-left: 10px;
  }

  .options {
    height: 43px;
    border-bottom: 4px solid #bdbdbd;
    background: #f5f5f5;
  }

  /* project browser */
  .work {
    flex: 1;
    min-height: 0;
    display: flex;
  }

  .dock {
    display: flex;
    flex-direction: column;
    flex: none;
    box-sizing: border-box;
    width: 466px;
    border-right: 2px solid #bdbdbd;
    background: #ececec;
  }

  .dock header {
    display: flex;
    align-items: center;
    justify-content: space-between;
    height: 28px;
    padding: 0 4px 0 6px;
    background: #d9d9d9;
  }

  .inner {
    flex: 1;
    min-height: 0;
    display: flex;
    flex-direction: column;
    margin: 0 3px 4px 4px;
    background: #fff;
  }

  .docktools {
    display: flex;
    height: 40px;
    background: #cacaca;
  }

  .docktools button {
    width: 41px;
    justify-content: center;
  }

  .docktools .current {
    background: #fff;
  }

  .search {
    display: flex;
    align-items: center;
    gap: 11px;
    height: 38px;
    margin: 16px 14px 14px;
    padding-left: 11px;
    border: 2px solid #e2e2e2;
  }

  .search input {
    flex: 1;
    min-width: 0;
    border: 0;
    outline: 0;
    font: inherit;
  }

  .search input::placeholder {
    color: #aaa;
  }

  .treewrap {
    flex: 1;
    min-height: 0;
    display: flex;
  }

  .treeview {
    flex: 1;
    min-width: 0;
    overflow: hidden;
  }

  /* the last row is cut off by the dock edge */
  .treeview ul {
    display: grid;
    grid-auto-rows: 1fr;
    height: calc(100% + 27px);
    margin: 0;
    padding: 0;
    list-style: none;
  }

  .treeview li {
    display: flex;
    align-items: center;
    min-height: 0;
    padding-left: 14px;
    white-space: nowrap;
  }

  .treeview .d0 {
    padding-left: 9px;
  }

  .treeview .selected {
    background: #f2f2f2;
    box-shadow: inset 0 0 0 2px #e0e0e0;
    font-weight: bold;
  }

  .guide,
  .stub {
    flex: none;
    align-self: stretch;
    box-sizing: border-box;
    width: 27px;
  }

  .guide {
    border-left: 2px dashed #b8b8b8;
  }

  .stub {
    width: 22px;
  }

  .d3 .stub {
    width: 50px;
  }

  .stub::before,
  .stub::after {
    content: "";
    display: block;
    box-sizing: border-box;
    width: 15px;
    height: 50%;
    border-left: 2px dashed #b8b8b8;
  }

  .stub::before {
    border-bottom: 2px dashed #b8b8b8;
  }

  .d3 .stub::before {
    width: 42px;
  }

  .stub.last::after {
    border: 0;
  }

  .toggle {
    flex: none;
    width: 14px;
    height: 14px;
    margin-right: 14px;
    background: linear-gradient(#777, #777) center / 14px 3px no-repeat, linear-gradient(#777, #777) center / 3px 14px no-repeat;
  }

  .toggle.open {
    background: linear-gradient(#777, #777) center / 14px 3px no-repeat;
  }

  .name {
    margin-left: 7px;
  }

  .toggle + .name {
    margin-left: 0;
  }

  .vscroll {
    display: flex;
    flex-direction: column;
    width: 29px;
    background: #e8e8e8;
  }

  .vscroll button {
    height: 27px;
    justify-content: center;
  }

  .vtrack {
    flex: 1;
    border-top: 2px solid #dcdcdc;
    border-bottom: 2px solid #dcdcdc;
  }

  .vtrack i {
    display: block;
    width: 9px;
    height: 38px;
    margin: 10px auto;
    border-radius: 4px;
    background: #d0d0d0;
  }

  .dock footer {
    display: flex;
    height: 38px;
    background: #cacaca;
  }

  .dock footer button {
    padding: 0 11px;
  }

  .dock footer .current {
    background: #ececec;
  }

  /* drawing area */
  main {
    position: relative;
    flex: 1;
    min-width: 0;
    display: flex;
    flex-direction: column;
    background: #fff;
  }

  .doctabs {
    display: flex;
    height: 34px;
    background: #cbcbcb;
  }

  .doctabs button {
    box-sizing: border-box;
    width: 216px;
    padding-left: 9px;
    gap: 11px;
  }

  .doctabs button:not(.current) :global(svg) {
    opacity: 0.6;
  }

  .doctabs .current {
    width: 250px;
    font-weight: bold;
    background: #fff;
  }

  .canvas {
    position: relative;
    flex: 1;
    min-height: 0;
    display: flex;
  }

  .plan {
    flex: 1;
    min-width: 0;
    height: 100%;
  }

  .tiny {
    font: 5px "Liberation Sans", sans-serif;
    text-anchor: middle;
    stroke: none;
  }

  .north {
    font: 14px "Liberation Serif", serif;
    text-anchor: middle;
  }

  .edge {
    width: 6px;
    margin-top: 3px;
    background: #e8e8e8;
  }

  .navbar {
    position: absolute;
    top: 3px;
    right: 6px;
    display: flex;
    flex-direction: column;
    align-items: center;
    box-sizing: border-box;
    width: 54px;
    height: 184px;
    border: 2px solid #bcbcbc;
    border-radius: 5px;
    background: #f4f4f4;
  }

  .corner {
    align-self: flex-end;
    padding: 2px 3px;
  }

  .corner.end {
    margin-top: auto;
  }

  .wheel {
    position: relative;
    margin-top: 7px;
  }

  .wheel b {
    position: absolute;
    right: 0;
    bottom: 0;
    font-size: 15px;
    line-height: 16px;
    color: #7595bd;
  }

  .navbar .caret {
    margin-top: 9px;
    border-top-color: #777;
  }

  .navbar hr {
    width: 45px;
    margin: 7px 0 12px;
    border: 0;
    border-top: 1px solid #bbb;
  }

  .region + .caret {
    margin-top: 15px;
  }

  .viewbar {
    display: flex;
    height: 29px;
    margin: 0 0 3px 4px;
    background: #f4f4f4;
  }

  .scale {
    width: 133px;
    padding-left: 21px;
    font-size: 18px;
    color: #111;
  }

  .tool {
    width: 42px;
    justify-content: center;
  }

  .arrow {
    width: 27px;
    justify-content: center;
    background: #e4e4e4;
  }

  .arrow.dark {
    margin-right: 7px;
    background: #d9d9d9;
  }

  .htrack {
    flex: 1;
    display: flex;
    align-items: center;
    justify-content: center;
    background: #e8e8e8;
  }

  .htrack i {
    width: 28px;
    height: 9px;
    border-radius: 3px;
    background: #d0d0d0;
  }

  .activate {
    position: absolute;
    right: 72px;
    bottom: 24px;
    width: 388px;
    color: #b4b4b4;
    font-size: 23px;
    line-height: 34px;
    white-space: nowrap;
    pointer-events: none;
  }

  .activate p {
    margin: 0;
    font-size: 32px;
    line-height: 44px;
  }

  /* status bar */
  .status {
    display: flex;
    align-items: center;
    box-sizing: border-box;
    height: 43px;
    padding-top: 1px;
    border-bottom: 3px solid #d6d6d6;
    background: #f4f4f4;
  }

  .msg {
    width: 882px;
    padding-left: 3px;
  }

  .drop {
    display: flex;
    align-items: center;
    align-self: stretch;
    box-sizing: border-box;
    margin-left: 6px;
    border-bottom: 3px solid #dcdcdc;
  }

  .drop select {
    appearance: none;
    border: 0;
    padding: 0 0 0 5px;
    background: none;
    font: inherit;
    color: #a4a4a4;
    opacity: 1;
  }

  .drop :global(svg) {
    margin-right: 6px;
    opacity: 0.6;
  }

  .workset {
    width: 323px;
  }

  .model {
    width: 322px;
  }

  .requests {
    display: flex;
    align-items: center;
    width: 61px;
    padding-left: 7px;
    color: #999;
  }

  .status > :global(svg + svg) {
    margin-left: 10px;
  }

  .filters {
    display: flex;
    gap: 9px;
    margin-left: auto;
    padding-right: 22px;
  }
</style>
